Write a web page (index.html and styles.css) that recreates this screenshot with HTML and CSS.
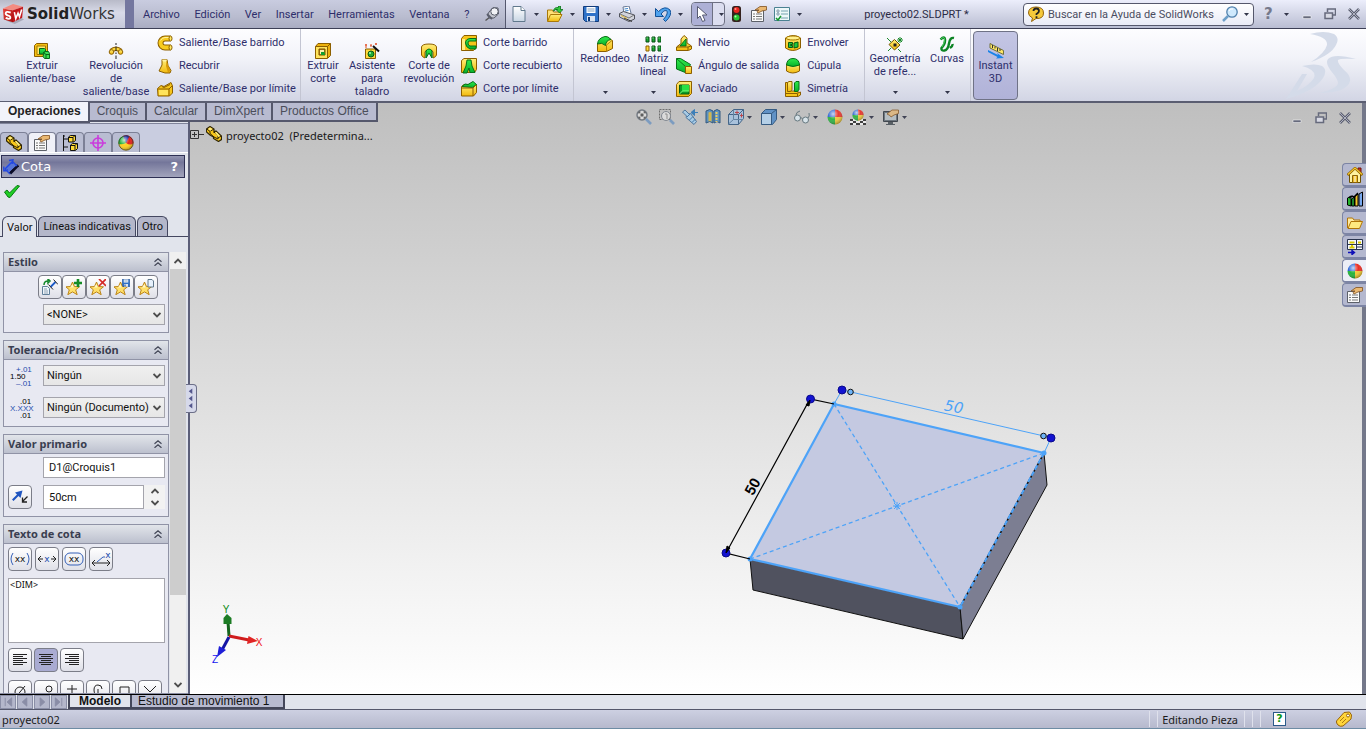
FILE: index.html
```html
<!DOCTYPE html>
<html lang="es">
<head>
<meta charset="utf-8">
<title>SolidWorks - proyecto02.SLDPRT</title>
<link rel="stylesheet" href="styles.css">
</head>
<body>
<svg class="defs" aria-hidden="true">
  <defs>
    <linearGradient id="gold" x1="0" y1="0" x2="0" y2="1"><stop offset="0" stop-color="#ffee7a"/><stop offset="1" stop-color="#f2b90c"/></linearGradient>
    <linearGradient id="green" x1="0" y1="0" x2="0" y2="1"><stop offset="0" stop-color="#30ea4c"/><stop offset="1" stop-color="#08b02a"/></linearGradient>
    <linearGradient id="red" x1="0" y1="0" x2="1" y2="1"><stop offset="0" stop-color="#e8453c"/><stop offset="1" stop-color="#a80d10"/></linearGradient>
    <linearGradient id="cover" x1="0" y1="0" x2="0" y2="1"><stop offset="0" stop-color="#fff"/><stop offset="1" stop-color="#c9d6e4"/></linearGradient>
    <radialGradient id="gloss" cx=".38" cy=".3" r=".7"><stop offset="0" stop-color="#fff" stop-opacity=".75"/><stop offset=".5" stop-color="#fff" stop-opacity="0"/><stop offset="1" stop-color="#000" stop-opacity=".3"/></radialGradient>
  </defs>
  <symbol id="i-extrude" viewBox="0 0 16 16"><path d="M.5 2.500 2.500.5h11v11l-2 2H.5z" fill="#f4c012" stroke="#8c5f00"/><path d="M3 3h8.500v8.500H3z" fill="#ffec70" stroke="#a87400"/><path d="M5.500 5.500h5l1 1V10l-1 1h-5z" fill="url(#green)" stroke="#066a18"/><path d="M10.500 8.500h4l1 2v5h-5l-1.500-2z" fill="#3bdc50" stroke="#066a18"/><path d="m9 9 3 2.500h3.500M12 11.500V15" stroke="#066a18" fill="none"/></symbol>
  <symbol id="i-revolve" viewBox="0 0 16 16"><path d="M3 8Q8 3.500 13 8" stroke="#8c5f00" stroke-width="4.500" fill="none"/><path d="M3 8Q8 3.500 13 8" stroke="#ffd83a" stroke-width="2.500" fill="none"/><circle cx="3.500" cy="9" r="2.300" fill="url(#gold)" stroke="#8c5f00"/><circle cx="12.500" cy="9" r="2.300" fill="url(#gold)" stroke="#8c5f00"/><path d="M8 0v2m0 1.500V8m0 1.500V11m0 1.500V16" stroke="#222" fill="none"/></symbol>
  <symbol id="i-sweep" viewBox="0 0 16 16"><path d="M13.500 3.500H8a4.500 4.500 0 0 0 0 9h5.500" fill="none" stroke="#8c5f00" stroke-width="6"/><path d="M14 3.500H8a4.500 4.500 0 0 0 0 9h6" fill="none" stroke="#f8cc20" stroke-width="4"/><path d="M13 2.500H8a5.500 5.500 0 0 0-4.500 3" fill="none" stroke="#fff2a0"/><ellipse cx="13.500" cy="3.500" rx="1.500" ry="2.500" fill="#ffe860" stroke="#8c5f00"/><ellipse cx="13.500" cy="12.500" rx="1.500" ry="2.500" fill="#ffe860" stroke="#8c5f00"/></symbol>
  <symbol id="i-loft" viewBox="0 0 16 16"><path d="M5 1.500h5l1 6 3 5-1 2.500H8L2 13l3-6z" fill="url(#gold)" stroke="#8c5f00"/><path d="M9.500 2 9 8l2 6.500 2.500-1.500-2.500-6z" fill="#d99b08"/><path d="M5 1.500h5l-1 2H6z" fill="#fff3a8"/></symbol>
  <symbol id="i-boundary" viewBox="0 0 16 16"><path d="M.5 7.500 4 4.500l3 1 7-4 1.500 3.500v7l-3 3H1z" fill="#f6c51a" stroke="#8c5f00"/><path d="M1 8h11l3-3M12 8v7M5 5.500l2 1 6-3" fill="none" stroke="#8c5f00"/><path d="M2 9h9v5H2z" fill="#ffe45c"/></symbol>
  <symbol id="i-cut" viewBox="0 0 16 16"><path d="M.5 3.500 3 .5h12.500v12l-3 3H.5z" fill="#eeb20c" stroke="#8c5f00"/><path d="M1 4h11v11H1z" fill="#ffe45c"/><path d="M12.500 3.500V15M.5 3.500h12l3-3" fill="none" stroke="#8c5f00"/><path d="M4 6h6v6H4z" fill="#b6860c" stroke="#7a4d00"/><path d="M5 7h4v4H5z" fill="#fff1b0"/><path d="M6 9h3V7l1 5H6z" fill="#10a030"/></symbol>
  <symbol id="i-wizard" viewBox="0 0 16 16"><path d="M1.500 6h10v9.500h-10z" fill="#ffdc3c" stroke="#8c5f00"/><circle cx="7" cy="11" r="3" fill="#20ac34" stroke="#075818"/><circle cx="6" cy="10" r="1" fill="#a0ffb0"/><path d="m9 3 6 5.500" stroke="#111" stroke-width="2"/><path d="M1 2h2m-1-1v2m4 0h2M7 1v2M1 4h2m8-3h2m-1-1v2" stroke="#e0461c"/></symbol>
  <symbol id="i-cutrev" viewBox="0 0 16 16"><path d="M.5 4Q1 1 8 1t7.500 3v8Q15 14 12 15V9l-1.500-2h-5L4 9v6Q1 14 .5 12z" fill="url(#gold)" stroke="#8c5f00"/><path d="M5 8q3-4 6 0v7L8 10l-3 5z" fill="url(#green)" stroke="#067018"/></symbol>
  <symbol id="i-cutsweep" viewBox="0 0 16 16"><path d="M.5 3.500 3 .5h12.500v12l-3 3H.5z" fill="#f6c51a" stroke="#8c5f00"/><path d="M1 4h3v11H1z" fill="#ffed80"/><path d="M15 3.500H9Q4.500 4 4.500 8T9 14h6v-3H9q-2-.5-2-3t2-2h6z" fill="url(#green)" stroke="#067018"/></symbol>
  <symbol id="i-cutloft" viewBox="0 0 16 16"><path d="M.5 2.500 3 .5h12.500v11l-2 3H.5z" fill="url(#gold)" stroke="#8c5f00"/><path d="M6 2h4l1 6 3 6.500H9L8 10l-2 5H2L5 8z" fill="url(#green)" stroke="#067018"/></symbol>
  <symbol id="i-cutbound" viewBox="0 0 16 16"><path d="M.5 5.500 3 3.500h12.500v8l-3 3.500H.5z" fill="url(#gold)" stroke="#8c5f00"/><path d="M1 5.500 4 3l3 .5L12 .5l3.500 3-4 3z" fill="url(#green)" stroke="#067018"/><path d="M1 7h11l3-3M12 7v8" fill="none" stroke="#8c5f00"/></symbol>
  <symbol id="i-fillet" viewBox="0 0 16 16"><path d="M.5 7.500 9 .5l6.500 4v8l-6 3h-9z" fill="url(#gold)" stroke="#8c5f00"/><path d="M9.500 15V9L15 4.500" fill="none" stroke="#b88400"/><path d="M.5 8Q1 2 8 .5q3-.5 6 3Q9 4 8.500 9.500 5 6 .5 8z" fill="url(#green)" stroke="#067018"/></symbol>
  <symbol id="i-pattern" viewBox="0 0 16 16"><path d="M1 1h3v5H1zM7 1h3v5H7zM13 1h3v5h-3zM7 10h3v5H7zM13 10h3v5h-3z" fill="#18a832" stroke="#064c12"/><path d="M1 10h3v5H1z" fill="#ffd83a" stroke="#8c5f00"/><path d="M1.500 2h1m5 0h1m5 0h1m-7 9h1m5 0h1" stroke="#a0ffa8"/></symbol>
  <symbol id="i-rib" viewBox="0 0 16 16"><path d="M.5 12 5 8.500V4L8 .5 11 3v5l4.500 3v3l-3 1.500H.5z" fill="url(#gold)" stroke="#8c5f00"/><path d="M4 11 10 4v7z" fill="url(#green)" stroke="#067018"/><path d="M1 12h11l3-1M12 12v3" fill="none" stroke="#8c5f00"/></symbol>
  <symbol id="i-draft" viewBox="0 0 16 16"><path d="M.5.5h4l10 6-4 8.500L.5 11z" fill="url(#green)" stroke="#067018"/><path d="m.5.5 9 8v6" fill="none" stroke="#0a7a1c"/><path d="M9.500 8.500h6v7h-6z" fill="url(#gold)" stroke="#8c5f00"/></symbol>
  <symbol id="i-shell" viewBox="0 0 16 16"><path d="M.5 3.500 3 .5h12.500v12l-3 3H.5z" fill="url(#gold)" stroke="#8c5f00"/><path d="M3.500 4h9.500v9H3.500z" fill="#0c9e28" stroke="#075a14"/><path d="M6 4h7v6H6z" fill="#28e044"/><path d="m3.500 13 3-3H13" stroke="#7cff80" fill="none"/></symbol>
  <symbol id="i-wrap" viewBox="0 0 16 16"><path d="M.5 3v10q7 5 15 0V3q-7-5-15 0z" fill="url(#gold)" stroke="#8c5f00"/><ellipse cx="8" cy="3" rx="7" ry="2" fill="#fff08c" stroke="#a87800"/><path d="M3.500 7.500h4v2h-2v1h2v2h-4zm5.500.5 4-1v5l-4 1z" fill="#20c83c" stroke="#075a14"/></symbol>
  <symbol id="i-dome" viewBox="0 0 16 16"><path d="M1.500 6v7q6 4 13 0V6z" fill="url(#gold)" stroke="#8c5f00"/><path d="M1.500 7Q2 .5 8 .5T14.500 7q-6.500 3-13 0z" fill="url(#green)" stroke="#067018"/></symbol>
  <symbol id="i-mirror" viewBox="0 0 16 16"><path d="M.5 1.500h2V10H13v2l2.500-1v3L13 15.500H.5z" fill="#f6c51a" stroke="#8c5f00"/><path d="M2.500 1.500 4 .5h3v8l-1.500 2h-3z" fill="url(#gold)" stroke="#8c5f00"/><path d="M9.500 2 11 .5h3v8l-1.500 2h-3z" fill="url(#green)" stroke="#067018"/><path d="M1 12.500h11.500V15" fill="none" stroke="#8c5f00"/></symbol>
  <symbol id="i-refgeo" viewBox="0 0 16 16"><path d="M7.500 3.500 13 9l-5.500 5L2 8.500z" fill="url(#gold)" stroke="#6e5200"/><path d="M6.500 7.500h3v3h-3z" fill="#222"/><path d="m0 2 4 4m7 7 3 3M1 15l3-3m9-11v6m-3-3h6M11 2l4 4m0-4-4 4" stroke="#168828"/></symbol>
  <symbol id="i-curves" viewBox="0 0 16 16"><path d="M1.500 3.500q4-4 4.500 0T2.500 12q-.5 3 3 2.500Q9 14 10 7.500T15 2M11 12q3-2 2.500-4" fill="none" stroke="#0c8424" stroke-width="2.400"/><path d="M2 3q3-3 3.500 0T3 11" fill="none" stroke="#5ce070" stroke-width=".8"/></symbol>
  <symbol id="i-instant" viewBox="0 0 16 16"><path d="m2 .5 13.500 7v4L2 5z" fill="#ffe765" stroke="#71703a"/><path d="M4.500 2v3M7 3.500v2m2.500-.5v3M12 6v2" stroke="#333" fill="none"/><path d="m0 7 10 5-1-2 7 5-8 .5 1.500-1.500L0 9z" fill="#1b83e8"/></symbol>
  <symbol id="i-new" viewBox="0 0 16 16"><path d="M2 .5h8l4 4v11H2z" fill="url(#cover)" stroke="#60788c"/><path d="M10 .5v4h4" fill="#fff" stroke="#60788c"/></symbol>
  <symbol id="i-open" viewBox="0 0 16 16"><path d="M.5 15V4h5l1 2h7v3" fill="#ffe078" stroke="#a87808"/><path d="m.5 15.500 3-7h11.500l-3.500 7z" fill="url(#gold)" stroke="#a87808"/><path d="M6.500 5q.5-4 5-3.500V0h2v3.500H16L12.500 7 9 3.500h1.500Q8.500 3 6.500 5z" fill="#35c840" stroke="#087018" stroke-width=".8"/></symbol>
  <symbol id="i-save" viewBox="0 0 16 16"><path d="M.5.5h15v15h-13l-2-2z" fill="#2f72c8" stroke="#123c7c"/><path d="M3.500 1h9v6h-9z" fill="#fff"/><path d="M4.500 3h7m-7 2h7" stroke="#87a4c2"/><path d="M4 10h8v5.500H4z" fill="#d9e3f1"/><path d="M5 11h2v4H5z" fill="#123c7c"/></symbol>
  <symbol id="i-print" viewBox="0 0 16 16"><path d="M5 8 4 1l6-1 2 7" fill="#fff" stroke="#667896"/><path d="M5.500 3 9 2.500M6 5l3.500-.5" stroke="#3b85cf"/><path d="m.5 7.500 4-2L15.500 9v4L10 15.500.5 11z" fill="#d2d4dc" stroke="#50535c"/><path d="m1 8 9 4 5-3" fill="none" stroke="#777"/><path d="m5 12 8 3.500" stroke="#333"/><path d="m2 9.500 6 3" stroke="#e7bc36"/></symbol>
  <symbol id="i-undo" viewBox="0 0 16 16"><path d="M.5 2.500v8h8L6 8q3-4.500 5.500-3.500 2.500 2.500-3 9l2 2q7-6.500 4.500-11.500Q10-1 3.500 5.500z" fill="#4ea2ee" stroke="#115198"/></symbol>
  <symbol id="i-cursor" viewBox="0 0 16 16"><path d="M3.500.5v12L6 10l2.500 5.500 2.500-1-2.500-5.500H13z" fill="#fff" stroke="#565a72"/></symbol>
  <symbol id="i-light" viewBox="0 0 16 16"><rect x="4" y="0" width="9" height="16" rx="2.500" fill="#34221e"/><circle cx="8.500" cy="4" r="3" fill="#e92720"/><circle cx="8.500" cy="11.500" r="3" fill="#27c634"/><circle cx="7.500" cy="3" r="1" fill="#ff9a8c"/><circle cx="7.500" cy="10.500" r="1" fill="#b2ffb6"/></symbol>
  <symbol id="i-props" viewBox="0 0 16 16"><path d="M.5 4.500h12v11H.5z" fill="#fafafa" stroke="#5c6068"/><path d="M2 8h2m1 0h6M2 10.500h2m1 0h6M2 13h2m1 0h6" stroke="#777"/><path d="M4 4 9 .5h6.500V4L11 5 7 7 6 5.500 8 4z" fill="#eab872" stroke="#805020" stroke-width=".8"/></symbol>
  <symbol id="i-list" viewBox="0 0 16 16"><path d="M.5 1.500h15v13H.5z" fill="#edf8f9" stroke="#4a8292"/><path d="M3 4h2v2H3zm0 3h2v2H3z" fill="#fff" stroke="#607f92" stroke-width=".7"/><path d="M7 5h7M7 8h7M7 12h7" stroke="#75a3b0"/><path d="m2 12 2 2 3-4" fill="none" stroke="#13962b" stroke-width="1.500"/></symbol>
  <symbol id="i-pin" viewBox="0 0 16 16"><path d="M1.500 14.500 6 11" stroke="#555" stroke-width="1.500"/><path d="M5 6 9 1.500l5 .5.500 6-4.500 4H5L3.500 9z" fill="#c3c5ce" stroke="#5a5e6c"/><circle cx="10.500" cy="5.500" r="3.700" fill="#f1f2f6" stroke="#5a5e6c"/><path d="m3 8 5 5" stroke="#5a5e6c" stroke-width="2"/></symbol>
  <symbol id="i-mag" viewBox="0 0 16 16"><circle cx="10" cy="6" r="5.200" fill="#cfe9fd" stroke="#5080ac" stroke-width="1.300"/><path d="M1 15 6 10" stroke="#6e9fc8" stroke-width="2.500"/><path d="M7 5q1-3 4-2" stroke="#fff" fill="none"/></symbol>
  <symbol id="i-zoomfit" viewBox="0 0 16 16"><circle cx="6" cy="6" r="5" fill="#dedede" stroke="#68707a" stroke-width="1.400"/><path d="m10 10 5 5" stroke="#7598c0" stroke-width="2.600"/><path d="M4.500 4.500h3v3h-3z" fill="#555"/><path d="M3 4.500V3h1.500m3 0H9v1.500m0 3V9H7.500m-3 0H3V7.500" stroke="#333" fill="none"/></symbol>
  <symbol id="i-zoomarea" viewBox="0 0 16 16"><path d="M.5.5h11v10H.5z" fill="none" stroke="#666" stroke-dasharray="2 1"/><circle cx="7" cy="7" r="4.500" fill="#dedede" stroke="#7c838d"/><path d="M6 5h2v5" fill="none" stroke="#888"/><path d="m11 11 4 4" stroke="#7598c0" stroke-width="2.600"/></symbol>
  <symbol id="i-prev" viewBox="0 0 16 16"><path d="M.5 3 3 1l4 4 1.500-.5 6 8-2.500 3L4 8.500 4.500 7z" fill="#a5cdea" stroke="#456f98"/><path d="m5 8 3-3m-.5 6L11 7.500M10 13.500l3.500-3.500" stroke="#3471a8"/><path d="M16 3.500h-5M12.500.5l-3.500 3 3.500 3z" stroke="#2f78b8" fill="#2f78b8"/></symbol>
  <symbol id="i-section" viewBox="0 0 16 16"><path d="M1 2q4-3 7 0v12q-3-3-7 0zM9 2q3-3 6 0v12q-3-3-6 0z" fill="#538ec1" stroke="#244e78"/><path d="M3.500 3.500q1.500-1 3 0v9q-1.500-1-3 0z" fill="#d6b640"/><path d="M11.500 3v10" stroke="#f1d05b" stroke-width="2" stroke-dasharray="2 1"/></symbol>
  <symbol id="i-orient" viewBox="0 0 16 16"><path d="M.5 5.500 5.500.5h10v9l-5 6H.5z" fill="#a7c3df" stroke="#375c82"/><path d="M.5 5.500h10v10m0-10 5-5" fill="none" stroke="#375c82"/><path d="M5.500 1v9.500H15M5.500 10.500.5 15" fill="none" stroke="#5b7e9f"/><path d="M7 3.500h4m-2-2v4m3 1h3m-1.500-2v4" fill="none" stroke="#bc3940"/></symbol>
  <symbol id="i-cube" viewBox="0 0 16 16"><path d="m.5 4.500 4-4h11v10l-4 5H.5z" fill="#568ec7" stroke="#27517c"/><path d="M1 5h9.500v10H1z" fill="#b4d2ec"/><path d="M10.500 15.500v-11m-10 0h10l5-4" fill="none" stroke="#27517c"/></symbol>
  <symbol id="i-glasses" viewBox="0 0 16 16"><circle cx="3.500" cy="9" r="3" fill="#dae7ee" stroke="#5d7078"/><circle cx="11.500" cy="11" r="3" fill="#dae7ee" stroke="#5d7078"/><path d="M6.500 9q1-1 2 1M2 6q0-3 4-4m8 7q2-2 1-5" fill="none" stroke="#5d7078"/></symbol>
  <symbol id="i-ball" viewBox="0 0 16 16"><path d="M8 8V.5A7.500 7.500 0 0 1 15.500 8z" fill="#ea2f25"/><path d="M8 8h7.500A7.500 7.500 0 0 1 8 15.500z" fill="#f2ca35"/><path d="M8 8v7.500A7.500 7.500 0 0 1 .5 8z" fill="#24b33b"/><path d="M8 8H.5A7.500 7.500 0 0 1 8 .5z" fill="#2a65d6"/><circle cx="8" cy="8" r="7.500" fill="url(#gloss)"/></symbol>
  <symbol id="i-ball3" viewBox="0 0 16 16"><circle cx="8" cy="8" r="7.500" fill="#ffd21f"/><path d="M8 8 5 .9A7.500 7.500 0 0 1 15.500 8q-3 3-7.500 0z" fill="#e3201c"/><path d="M5 1A7.500 7.500 0 0 0 .5 9Q4 10 8 8z" fill="#24b33b"/><path d="M8 8 5 1q6-2 6 1z" fill="#1c2ea8"/><circle cx="8" cy="8" r="7.200" fill="url(#gloss)" stroke="#333" stroke-width=".7"/></symbol>
  <symbol id="i-scene" viewBox="0 0 16 16"><path d="M0 10h16v6H0z" fill="#eee"/><path d="M0 10h3v2H0zm13 0h3v2h-3zM3 12h3v2H3zm7 0h3v2h-3zM0 14h3v2H0zm6 0h4v2H6zm7 0h3v2h-3z" fill="#333"/><svg x="2" width="12" height="12"><use href="#i-ball"/></svg></symbol>
  <symbol id="i-screen" viewBox="0 0 16 16"><path d="M.5 2.500h14v10H.5z" fill="#667078" stroke="#353c44"/><path d="M2 4h11v7H2z" fill="#b5bec3"/><path d="M5 13h5v2h2v1H3v-1h2z" fill="#4d555c"/><path d="m4 5 5-4h6.500v3.500L11 6 8 8 7 6.500z" fill="#dfb880" stroke="#805020" stroke-width=".8"/></symbol>
  <symbol id="i-part" viewBox="0 0 16 16"><path d="M.5 3 4 .5 8 3v3l2-1 5.500 5v3.500l-3 2-5-3V11L4 9 .5 6z" fill="#f6c51a" stroke="#2f2504" stroke-width="1.200"/><path d="m1 3 3 2.500v2L8 11l4 2V10L8 6M8 3 4.500 5M15 10l-3 2" fill="none" stroke="#2f2504"/><path d="m2 3 2-1.500L6.500 3l-2 1.500zM9 7l1.500-1L14 10l-1.500 1z" fill="#ffed7c"/></symbol>
  <symbol id="i-config" viewBox="0 0 16 16"><path d="M1.500 0v16M1 4h5m-5 8h5M1 1h2" stroke="#111" fill="none"/><path d="m6.500 2 2-1.500h5v5l-2 1.500h-5zm2 8 2-1.500h5v5l-2 2h-5z" fill="#ffda37" stroke="#111"/><path d="M6.500 2.500h4.500V7M8.500 10.500H13V15m-2-12.500 2-2m0 10 2-2" fill="none" stroke="#111"/></symbol>
  <symbol id="i-target" viewBox="0 0 16 16"><circle cx="8" cy="8" r="5" fill="none" stroke="#ca3cdc" stroke-width="1.600"/><path d="M8 0v16M0 8h16" stroke="#ca3cdc" stroke-width="1.600"/></symbol>
  <symbol id="i-dim" viewBox="0 0 16 16"><path d="m7 14.500 8-8.500" stroke="#0b0d28" stroke-width="3"/><path d="M6 13 2 8.500l6.500-7L14 6z" fill="#5574d8"/><path d="m2 10 7-7M.8 7.500v4.200L5 11M6 1.500l4-.7-.7 4M2 10l5 5M9 2l5 5" fill="none" stroke="#2348e0" stroke-width="1.400"/></symbol>
  <symbol id="i-check" viewBox="0 0 16 16"><path d="m.5 9 2.500-2 2.500 3L13 2.500l2.500.5L6 14.500 4 14z" fill="#20ce25" stroke="#087812"/></symbol>
  <symbol id="i-style" viewBox="0 0 16 16"><path d="M.5 7.500h5l2 2v6h-7z" fill="#eef5fb" stroke="#61809a"/><path d="M2 6q0-4 4-4m0-2v4l2-2z" fill="none" stroke="#13872a" stroke-width="1.500"/><path d="m8.500 8 5-5" stroke="#1c5cc8" stroke-width="1.800"/><path d="m6.500 5.500 4.500 5M11.500.5l4.500 5" stroke="#222" fill="none"/><path d="M2 10h3m-3 2h4m-4 2h4" stroke="#92a4b4"/></symbol>
  <symbol id="i-star" viewBox="0 0 16 16"><path d="m6.500 3 2 4.500 5 .3-3.800 3 1.500 4.900-4.700-2.800-4.700 2.800 1.500-4.900L-.2 7.800l4.700-.3z" fill="#ffe06a" stroke="#b57b0b" stroke-width=".9"/><path d="m6.500 5 1 3.500H4z" fill="#fff6c8"/></symbol>
  <symbol id="i-staradd" viewBox="0 0 16 16"><use href="#i-star"/><path d="M12 0v8M8 4h8" stroke="#158c26" stroke-width="2.600"/></symbol>
  <symbol id="i-stardel" viewBox="0 0 16 16"><use href="#i-star"/><path d="m9 0 7 7m0-7L9 7" stroke="#d52b27" stroke-width="1.700"/></symbol>
  <symbol id="i-starsave" viewBox="0 0 16 16"><use href="#i-star"/><svg x="8" y="0" width="8" height="8"><use href="#i-save"/></svg></symbol>
  <symbol id="i-starload" viewBox="0 0 16 16"><use href="#i-star"/><path d="M10 .5h4l1.500 1.500v6H10z" fill="#e7f1fc" stroke="#60788c"/></symbol>
  <symbol id="i-up2" viewBox="0 0 8 8"><path d="m.5 3.800 3.500-3 3.500 3m-7 4 3.500-3 3.500 3" fill="none" stroke="#444858" stroke-width="1.200"/></symbol>
  <symbol id="i-chev" viewBox="0 0 8 6"><path d="m.5 1 3.500 3.500L7.500 1" fill="none" stroke="#4c4c4c" stroke-width="1.900"/></symbol>
  <symbol id="i-caret" viewBox="0 0 5 3"><path d="M0 0h5L2.500 3z" fill="#33364a"/></symbol>
  <symbol id="i-min" viewBox="0 0 12 12"><path d="M2 8h8v2.500H2z" fill="#666a7c" stroke="#fff" stroke-width=".5"/></symbol>
  <symbol id="i-restore" viewBox="0 0 12 12"><path d="M3.500 4V1h8v6H9" fill="none" stroke="#666a7c" stroke-width="1.500"/><path d="M1 5h7.500v5.500H1z" fill="#d8dae4" stroke="#666a7c" stroke-width="1.500"/></symbol>
  <symbol id="i-close" viewBox="0 0 12 12"><path d="m1 1 10 10m0-10L1 11" stroke="#5c6072" stroke-width="2.600"/><path d="m1 1 10 10m0-10L1 11" stroke="#c3c5d3" stroke-width=".8"/></symbol>
  <symbol id="i-swap" viewBox="0 0 16 16"><path d="m0 10.500 5-5L3 3.500l7.500-2-2 7.500-2-2-5 5z" fill="#2056c0"/><path d="m15.500 7.500-5 5m0-4V13H15" fill="none" stroke="#222" stroke-width="1.300"/></symbol>
  <symbol id="i-home" viewBox="0 0 16 16"><path d="M11 1h3v6h-3z" fill="#c43024" stroke="#6e1610"/><path d="M2.500 7v8.500h11V7L8 2z" fill="#fff3a0" stroke="#6e5100"/><path d="m.5 8 7.500-7 7.500 7" fill="none" stroke="#8b6208" stroke-width="2.400"/><path d="m1 7.500 7-6.500 7 6.500" fill="none" stroke="#f4c72f" stroke-width="1.200"/><path d="M5.500 8.500h5v7h-5z" fill="#f2bf24" stroke="#8b6208"/><path d="M8 9v6" stroke="#fff"/></symbol>
  <symbol id="i-books" viewBox="0 0 16 16"><path d="M.5 7 4 5v10l-3.500-1z" fill="#26b52e" stroke="#000"/><path d="m4.500 8 3-2v9h-3z" fill="#19842b" stroke="#000"/><path d="m8 5 3-2v12H8z" fill="#f4c52c" stroke="#000"/><path d="m12 3 3.500-2v14H12z" fill="#79a9ef" stroke="#000"/><path d="m2 7 3-2 2 1 4-4" stroke="#000" fill="none" stroke-width="1.500"/></symbol>
  <symbol id="i-folder" viewBox="0 0 16 16"><path d="M.5 13V3h5l1.500 2h6v3" fill="#ffeaa0" stroke="#b07408"/><path d="m1 13.500 3-7h11.500l-3 7z" fill="#ffe980" stroke="#b07408"/></symbol>
  <symbol id="i-palette" viewBox="0 0 16 16"><path d="M.5.500h15v10H.5z" fill="#f6f7ff" stroke="#29344e"/><path d="M2.500 3.500h5m-5 5h5M4 6.500h2m5-3h3" stroke="#d9cb00" stroke-width="1.800"/><path d="M9.500 1v9M1 5.500h14M10 8h5" stroke="#29344e"/><path d="M1 13.500h5M5 11.500 7.500 13.500 5 15.500z" stroke="#1010b8" fill="#1010b8" stroke-width="1.400"/></symbol>
  <symbol id="i-help" viewBox="0 0 16 16"><path d="M8 1q7.500 0 7.500 6T8 12.500L3.500 15.500l1-3.500Q.5 10 .5 7 .5 1 8 1z" fill="#f6c93a" stroke="#94640b"/><path d="M5.500 5q0-2.500 2.700-2.500T11 5q0 1.500-2.500 3v1m0 1.200V12" fill="none" stroke="#222" stroke-width="1.800"/></symbol>
  <symbol id="i-tag" viewBox="0 0 16 16"><path d="M.5 10 8 1.500l5.500-.5L15.500 4 15 8l-8 7q-3 1-5-1T.5 10z" fill="#ffd53a" stroke="#98640a"/><circle cx="12" cy="4.500" r="1.500" fill="#fff" stroke="#98640a"/><path d="m4 10 4-4m-2 6 4-4" stroke="#ad7a14"/></symbol>
</svg>

<header class="titlebar">
  <div class="brand">
    <svg class="brand-mark" viewBox="0 0 24 22" aria-hidden="true"><path d="M4 18 14 22 24 17 21 15z" fill="#8d8f9e" opacity=".6"/><path d="m1 5 11 2v13L2 17z" fill="url(#red)"/><path d="m1 5 11 2 11-4-11-3z" fill="#f38b81"/><path d="m12 7 11-4-1 12-10 5z" fill="#c2181c"/><path d="M9.500 9.500Q4 7.500 4 10.500q0 1.500 2.800 2.200T9 15.500q-1 1.500-5-.2" fill="none" stroke="#fff" stroke-width="2"/><path d="m13.500 9 1.500 7 2.500-6 1.500 4 2.500-8" fill="none" stroke="#fff" stroke-width="1.700"/></svg>
    <span class="brand-name"><b>Solid</b>Works</span>
  </div>
  <nav class="menu">
    <button>Archivo</button><button>Edición</button><button>Ver</button><button>Insertar</button><button>Herramientas</button><button>Ventana</button><button>?</button>
    <button class="pin" aria-label="Fijar menú"><svg class="ic"><use href="#i-pin"/></svg></button>
  </nav>
  <div class="quick">
    <button class="tool" aria-label="Nuevo"><svg class="ic"><use href="#i-new"/></svg><svg class="caret"><use href="#i-caret"/></svg></button>
    <button class="tool" aria-label="Abrir"><svg class="ic"><use href="#i-open"/></svg><svg class="caret"><use href="#i-caret"/></svg></button>
    <button class="tool" aria-label="Guardar"><svg class="ic"><use href="#i-save"/></svg><svg class="caret"><use href="#i-caret"/></svg></button>
    <button class="tool" aria-label="Imprimir"><svg class="ic"><use href="#i-print"/></svg><svg class="caret"><use href="#i-caret"/></svg></button>
    <button class="tool" aria-label="Deshacer"><svg class="ic"><use href="#i-undo"/></svg><svg class="caret"><use href="#i-caret"/></svg></button>
    <button class="tool picked" aria-label="Seleccionar"><span class="pick"><svg class="ic"><use href="#i-cursor"/></svg></span><svg class="caret"><use href="#i-caret"/></svg></button>
    <button class="tool single" aria-label="Reconstruir"><svg class="ic"><use href="#i-light"/></svg></button>
    <button class="tool single" aria-label="Propiedades"><svg class="ic"><use href="#i-props"/></svg></button>
    <button class="tool" aria-label="Opciones"><svg class="ic"><use href="#i-list"/></svg><svg class="caret"><use href="#i-caret"/></svg></button>
  </div>
  <h1 class="doc-title">proyecto02.SLDPRT *</h1>
  <form class="search">
    <svg class="ic" aria-hidden="true"><use href="#i-help"/></svg>
    <input type="text" aria-label="Buscar en la Ayuda" placeholder="Buscar en la Ayuda de SolidWorks">
    <button type="button" aria-label="Buscar"><svg class="ic"><use href="#i-mag"/></svg><svg class="caret"><use href="#i-caret"/></svg></button>
  </form>
  <div class="win">
    <button class="q" aria-label="Ayuda">?</button>
    <button aria-label="Más ayuda"><svg class="caret"><use href="#i-caret"/></svg></button>
    <button aria-label="Minimizar"><svg class="wic"><use href="#i-min"/></svg></button>
    <button aria-label="Restaurar"><svg class="wic"><use href="#i-restore"/></svg></button>
    <button aria-label="Cerrar"><svg class="wic"><use href="#i-close"/></svg></button>
  </div>
</header>

<section class="ribbon" aria-label="Operaciones">
  <div class="group g1">
    <button class="big"><svg class="ic"><use href="#i-extrude"/></svg>Extruir<br>saliente/base</button>
    <button class="big"><svg class="ic"><use href="#i-revolve"/></svg>Revolución<br>de<br>saliente/base</button>
    <div class="stack">
      <button><svg class="ic"><use href="#i-sweep"/></svg>Saliente/Base barrido</button>
      <button><svg class="ic"><use href="#i-loft"/></svg>Recubrir</button>
      <button><svg class="ic"><use href="#i-boundary"/></svg>Saliente/Base por límite</button>
    </div>
  </div>
  <div class="group g2">
    <button class="big"><svg class="ic"><use href="#i-cut"/></svg>Extruir<br>corte</button>
    <button class="big"><svg class="ic"><use href="#i-wizard"/></svg>Asistente<br>para<br>taladro</button>
    <button class="big"><svg class="ic"><use href="#i-cutrev"/></svg>Corte de<br>revolución</button>
    <div class="stack">
      <button><svg class="ic"><use href="#i-cutsweep"/></svg>Corte barrido</button>
      <button><svg class="ic"><use href="#i-cutloft"/></svg>Corte recubierto</button>
      <button><svg class="ic"><use href="#i-cutbound"/></svg>Corte por límite</button>
    </div>
  </div>
  <div class="group g3">
    <button class="big drop"><svg class="ic"><use href="#i-fillet"/></svg>Redondeo<svg class="caret"><use href="#i-caret"/></svg></button>
    <button class="big drop"><svg class="ic"><use href="#i-pattern"/></svg>Matriz<br>lineal<svg class="caret"><use href="#i-caret"/></svg></button>
    <div class="stack">
      <button><svg class="ic"><use href="#i-rib"/></svg>Nervio</button>
      <button><svg class="ic"><use href="#i-draft"/></svg>Ángulo de salida</button>
      <button><svg class="ic"><use href="#i-shell"/></svg>Vaciado</button>
    </div>
    <div class="stack">
      <button><svg class="ic"><use href="#i-wrap"/></svg>Envolver</button>
      <button><svg class="ic"><use href="#i-dome"/></svg>Cúpula</button>
      <button><svg class="ic"><use href="#i-mirror"/></svg>Simetría</button>
    </div>
  </div>
  <div class="group g4">
    <button class="big drop"><svg class="ic"><use href="#i-refgeo"/></svg>Geometría<br>de refe...<svg class="caret"><use href="#i-caret"/></svg></button>
    <button class="big drop"><svg class="ic"><use href="#i-curves"/></svg>Curvas<svg class="caret"><use href="#i-caret"/></svg></button>
  </div>
  <button class="big instant"><svg class="ic"><use href="#i-instant"/></svg>Instant<br>3D</button>
  <svg class="ds" viewBox="1287 31 72 70" aria-hidden="true"><path d="M1311 34q14-4 24 0 6 4 2 11-5 10-25 17 14-9 16-17 1-8-17-11zM1303 66q14-3 20 0 6 4 1 12-8 13-37 21l16-25h5l-10 17q12-5 17-13 3-8-12-12zM1357 59q-16-1-18 1-1 3 6 10 7 6 6 11-3 12-31 12 18-4 19-10 0-4-7-12-6-8-3-12 6-6 28 0z" fill="#d4dbe9"/></svg>
</section>

<main class="work">
  <nav class="cmd-tabs">
    <button class="on">Operaciones</button><button>Croquis</button><button>Calcular</button><button>DimXpert</button><button>Productos Office</button>
  </nav>

  <aside class="panel">
    <div class="panel-tabs">
      <button aria-label="Gestor de diseño"><svg class="ic"><use href="#i-part"/></svg></button>
      <button class="on" aria-label="PropertyManager"><svg class="ic"><use href="#i-props"/></svg></button>
      <button aria-label="Configuraciones"><svg class="ic"><use href="#i-config"/></svg></button>
      <button aria-label="DimXpert"><svg class="ic"><use href="#i-target"/></svg></button>
      <button aria-label="Apariencias"><svg class="ic"><use href="#i-ball3"/></svg></button>
    </div>
    <h2 class="pm-title"><svg class="ic"><use href="#i-dim"/></svg><span>Cota</span><button aria-label="Ayuda">?</button></h2>
    <button class="ok" aria-label="Aceptar"><svg class="ic"><use href="#i-check"/></svg></button>
    <div class="pm-tabs"><button class="on">Valor</button><button>Líneas indicativas</button><button>Otro</button></div>

    <div class="pm-body">
      <div class="pm-list">
        <section class="box">
          <h3>Estilo<svg class="up2"><use href="#i-up2"/></svg></h3>
          <div class="styles">
            <button class="sq" aria-label="Aplicar estilo"><svg class="ic"><use href="#i-style"/></svg></button><button class="sq" aria-label="Agregar estilo"><svg class="ic"><use href="#i-staradd"/></svg></button><button class="sq" aria-label="Eliminar estilo"><svg class="ic"><use href="#i-stardel"/></svg></button><button class="sq" aria-label="Guardar estilo"><svg class="ic"><use href="#i-starsave"/></svg></button><button class="sq" aria-label="Cargar estilo"><svg class="ic"><use href="#i-starload"/></svg></button>
          </div>
          <div class="row"><span class="lead"></span><span class="sel"><select aria-label="Estilo"><option>&lt;NONE&gt;</option></select><svg><use href="#i-chev"/></svg></span></div>
        </section>
        <section class="box tol">
          <h3>Tolerancia/Precisión<svg class="up2"><use href="#i-up2"/></svg></h3>
          <div class="row"><svg class="lead" viewBox="0 0 26 22"><text x="8" y="7" class="mini blue">+.01</text><text x="2" y="14" class="mini">1.50</text><text x="8" y="21" class="mini blue">–.01</text></svg><span class="sel"><select aria-label="Tipo de tolerancia"><option>Ningún</option></select><svg><use href="#i-chev"/></svg></span></div>
          <div class="row"><svg class="lead" viewBox="0 0 26 22"><text x="12" y="7" class="mini">.01</text><text x="2" y="14" class="mini blue">X.XXX</text><text x="12" y="21" class="mini">.01</text></svg><span class="sel"><select aria-label="Precisión"><option>Ningún (Documento)</option></select><svg><use href="#i-chev"/></svg></span></div>
        </section>
        <section class="box prim">
          <h3>Valor primario<svg class="up2"><use href="#i-up2"/></svg></h3>
          <div class="row"><span class="lead"></span><input type="text" aria-label="Nombre" value="D1@Croquis1"></div>
          <div class="row"><span class="lead"><button class="sq" aria-label="Invertir sentido"><svg class="ic"><use href="#i-swap"/></svg></button></span><input class="tall" type="text" aria-label="Valor" value="50cm"><span class="spin"><button aria-label="Aumentar"><svg class="flip"><use href="#i-chev"/></svg></button><button aria-label="Disminuir"><svg><use href="#i-chev"/></svg></button></span></div>
        </section>
        <section class="box txt">
          <h3>Texto de cota<svg class="up2"><use href="#i-up2"/></svg></h3>
          <div class="btns">
            <button class="sq" aria-label="Paréntesis"><svg class="wide" viewBox="0 0 20 16"><path d="M3 2Q-1 8 3 14M17 2q4 6 0 12" class="ln b"/><text x="10" y="11" class="xx">xx</text></svg></button>
            <button class="sq" aria-label="Centrar cota"><svg class="wide" viewBox="0 0 20 16"><path d="M1 8h5M4 5 1 8l3 3m15-3h-5m2-3 3 3-3 3" class="ln"/><text x="10" y="11" class="xx blue">x</text></svg></button>
            <button class="sq" aria-label="Inspección"><svg class="wide" viewBox="0 0 20 16"><rect x="1" y="2" width="18" height="12" rx="5" class="ln b"/><text x="10" y="11" class="xx">xx</text></svg></button>
            <button class="sq" aria-label="Desplazar texto"><svg class="wide" viewBox="0 0 20 16"><path d="M1 12h18M4 9l-3 3 3 3m12-6 3 3-3 3" class="ln"/><path d="m6 11 6-5h2" class="ln b"/><text x="17" y="7" class="xx blue">x</text></svg></button>
          </div>
          <textarea aria-label="Texto de cota">&lt;DIM&gt;</textarea>
          <div class="btns tight">
            <button class="sq" aria-label="Izquierda"><svg class="ic" viewBox="0 0 16 16"><path d="M1 2.500h14m-14 2h10m-10 2h14m-14 2h10m-10 2h14m-14 2h10" class="ln"/></svg></button>
            <button class="sq on" aria-label="Centro"><svg class="ic" viewBox="0 0 16 16"><path d="M1 2.500h14m-12 2h10m-12 2h14m-12 2h10m-12 2h14m-12 2h10" class="ln"/></svg></button>
            <button class="sq" aria-label="Derecha"><svg class="ic" viewBox="0 0 16 16"><path d="M1 2.500h14m-10 2h10m-14 2h14m-10 2h10m-14 2h14m-10 2h10" class="ln"/></svg></button>
          </div>
          <div class="btns tight">
            <button class="sq" aria-label="Diámetro"><svg class="ic" viewBox="0 0 16 16"><circle cx="8" cy="8" r="5" class="ln"/><path d="M3 14 13 2" class="ln"/></svg></button>
            <button class="sq" aria-label="Grados"><svg class="ic" viewBox="0 0 16 16"><circle cx="11" cy="5" r="3" class="ln"/></svg></button>
            <button class="sq" aria-label="Más menos"><svg class="ic" viewBox="0 0 16 16"><path d="M8 1v10M3 5h10" class="ln"/></svg></button>
            <button class="sq" aria-label="Línea central"><svg class="ic" viewBox="0 0 16 16"><path d="M12 5q0-4-4-4T4 6t4 5M8 5v4" class="ln"/></svg></button>
            <button class="sq" aria-label="Cuadrado"><svg class="ic" viewBox="0 0 16 16"><path d="M4 3h9v9H4z" class="ln"/></svg></button>
            <button class="sq" aria-label="Más símbolos"><svg class="ic" viewBox="0 0 16 16"><path d="m2 2 6 6 6-6" class="ln"/></svg></button>
          </div>
        </section>
      </div>
      <div class="scroll"><button aria-label="Subir"><svg class="flip"><use href="#i-chev"/></svg></button><span class="thumb"></span><button aria-label="Bajar"><svg><use href="#i-chev"/></svg></button></div>
    </div>
    <button class="splitter" aria-label="Contraer panel"><svg viewBox="0 0 10 28"><path d="M7 3v6L3 6zM7 11v6l-4-3zM7 19v6l-4-3z" fill="#53568c"/></svg></button>
  </aside>

  <div class="view">
    <svg class="model" viewBox="190 103 1172 591" role="img" aria-label="Pieza en 3D">
      <path d="M750 559 960 607l3 32-210-49z" fill="#50525f" stroke="#111"/>
      <path d="m1044 453 3 32-84 154-3-32z" fill="#7c7e92" stroke="#111"/>
      <path d="m834 404 210 49-84 154-210-48z" fill="#c4c9e1"/>
      <path d="m1044 453-84 154" stroke="#111" stroke-width="1.500"/>
      <path d="m1044 453-84 154" stroke="#4da3f8" stroke-width="2" stroke-dasharray="5 2"/>
      <path d="m1044 453-210-49-84 155 210 48" fill="none" stroke="#4da3f8" stroke-width="2.200"/>
      <path d="m834 404 126 203M750 559l294-106" stroke="#4da3f8" stroke-width="1.300" stroke-dasharray="4 3" fill="none"/>
      <path d="M893 506h8m-4-4v8m-3-7 6 6m0-6-6 6" stroke="#4da3f8"/>
      <g fill="#4da3f8"><circle cx="834" cy="404" r="2.500"/><circle cx="1044" cy="453" r="2.500"/><circle cx="960" cy="607" r="2.500"/><circle cx="750" cy="559" r="2.500"/></g>
      <path d="m834 404 8-14 9 2 193 44 7 2-7 15" fill="none" stroke="#4da3f8"/>
      <path d="m834 404-24-5-84 154 24 6" fill="none" stroke="#000" stroke-width="1.200"/>
      <g fill="#1212d0" stroke="#0a0a8c"><circle cx="842" cy="390" r="4"/><circle cx="1051" cy="438" r="4"/><circle cx="810.500" cy="399" r="4"/><circle cx="726" cy="553" r="4"/></g>
      <path d="m810 400-4 5 3 1zM726 553l1-7 3 2z" stroke="#000"/>
      <g fill="#6eb4f8" stroke="#111"><circle cx="850.500" cy="392" r="2.800"/><circle cx="1043.500" cy="436" r="2.800"/></g>
      <text class="dim sel-dim" transform="translate(953 412) rotate(10)">50</text>
      <text class="dim" transform="translate(757 489) rotate(-61)">50</text>
      <g class="triad">
        <path d="m229 636-1-14" stroke="#14641c" stroke-width="3"/><path d="m227 614 4.500 4v6h-8v-6z" fill="#1c7c24"/>
        <path d="m229 636 20 4" stroke="#d01c1c" stroke-width="3"/><path d="m258 641-11 3 1.500-8z" fill="#e02424"/>
        <path d="m229 637-7 13" stroke="#1414a4" stroke-width="3"/><path d="m217 657 2-11 7 4z" fill="#1e1ed8"/>
        <text x="226" y="613" fill="#0a8a14">Y</text><text x="259" y="646" fill="#f01414">X</text><text x="215" y="663" fill="#1414f0">Z</text>
      </g>
    </svg>
    <div class="tree"><svg class="plus" viewBox="0 0 14 9"><path d="M.5.500h8v8h-8zM2 4.500h5M4.500 2v5M9 4.500h5" fill="none" stroke="#333"/></svg><svg class="ic"><use href="#i-part"/></svg><span>proyecto02&nbsp; (Predetermina...</span></div>
    <div class="hud">
      <button aria-label="Zoom para ajustar"><svg class="ic"><use href="#i-zoomfit"/></svg></button>
      <button aria-label="Zoom encuadre"><svg class="ic"><use href="#i-zoomarea"/></svg></button>
      <button aria-label="Vista previa"><svg class="ic"><use href="#i-prev"/></svg></button>
      <button aria-label="Vista de sección"><svg class="ic"><use href="#i-section"/></svg></button>
      <button class="w" aria-label="Orientación"><svg class="ic"><use href="#i-orient"/></svg><svg class="caret"><use href="#i-caret"/></svg></button>
      <button class="w" aria-label="Estilo de visualización"><svg class="ic"><use href="#i-cube"/></svg><svg class="caret"><use href="#i-caret"/></svg></button>
      <button class="w" aria-label="Ocultar/visualizar"><svg class="ic"><use href="#i-glasses"/></svg><svg class="caret"><use href="#i-caret"/></svg></button>
      <button aria-label="Editar apariencia"><svg class="ic"><use href="#i-ball"/></svg></button>
      <button class="w" aria-label="Escena"><svg class="ic"><use href="#i-scene"/></svg><svg class="caret"><use href="#i-caret"/></svg></button>
      <button class="w" aria-label="Configuración de vista"><svg class="ic"><use href="#i-screen"/></svg><svg class="caret"><use href="#i-caret"/></svg></button>
    </div>
    <div class="doc-win">
      <button aria-label="Minimizar documento"><svg class="wic"><use href="#i-min"/></svg></button>
      <button aria-label="Restaurar documento"><svg class="wic"><use href="#i-restore"/></svg></button>
      <button aria-label="Cerrar documento"><svg class="wic"><use href="#i-close"/></svg></button>
    </div>
  </div>
  <div class="edge"></div>
  <nav class="task">
    <button aria-label="Recursos"><svg class="ic"><use href="#i-home"/></svg></button>
    <button aria-label="Biblioteca de diseño"><svg class="ic"><use href="#i-books"/></svg></button>
    <button aria-label="Explorador de archivos"><svg class="ic"><use href="#i-folder"/></svg></button>
    <button aria-label="Paleta de visualización"><svg class="ic"><use href="#i-palette"/></svg></button>
    <button class="on" aria-label="Apariencias y escenas"><svg class="ic"><use href="#i-ball"/></svg></button>
    <button aria-label="Propiedades personalizadas"><svg class="ic"><use href="#i-props"/></svg></button>
  </nav>
</main>

<nav class="sheets">
  <button class="nav" aria-label="Primero"><svg viewBox="0 0 14 13"><path d="M4 2v9M11 2v9L6 6.500z"/></svg></button>
  <button class="nav" aria-label="Anterior"><svg viewBox="0 0 14 13"><path d="M9 2v9L4 6.500z"/></svg></button>
  <button class="nav" aria-label="Siguiente"><svg viewBox="0 0 14 13"><path d="M5 2v9l5-4.500z"/></svg></button>
  <button class="nav" aria-label="Último"><svg viewBox="0 0 14 13"><path d="M10 2v9M3 2v9l5-4.500z"/></svg></button>
  <button class="sheet on">Modelo</button><button class="sheet">Estudio de movimiento 1</button>
</nav>
<footer class="status">
  <span class="name">proyecto02</span>
  <span class="cell"></span><span class="cell mode">Editando Pieza</span><span class="cell"></span><span class="cell"></span>
  <button class="cell qm" aria-label="Ayuda rápida"><b>?</b></button>
  <button class="tag" aria-label="Etiquetas"><svg class="ic"><use href="#i-tag"/></svg></button>
</footer>
</body>
</html>
```

FILE: styles.css
```css
:root {
  --ui: Roboto, "Noto Sans", sans-serif;
  --head: "Noto Sans", "Open Sans", sans-serif;
  --tab: "Liberation Sans", Arial, sans-serif;
  --navy: #2e2e6b;
}
* { box-sizing: border-box; }
body {
  margin: 0;
  height: 100vh;
  display: flex;
  flex-direction: column;
  overflow: hidden;
  font: 11px/13px var(--ui);
  color: #1a1a1a;
  background: #e1e4ec;
}
button {
  font: inherit;
  color: inherit;
  background: none;
  border: 0;
  padding: 0;
  margin: 0;
}
h1, h2, h3 { margin: 0; font: inherit; }
.defs { position: absolute; width: 0; height: 0; }
.ic { width: 16px; height: 16px; flex: none; display: block; overflow: visible; }
.caret { width: 5px; height: 3px; flex: none; display: block; }
.wic { width: 12px; height: 12px; display: block; }

/* Title bar */
.titlebar {
  flex: none;
  height: 29px;
  display: flex;
  align-items: center;
  background: linear-gradient(#eceefb, #b9bdd2);
  border-bottom: 1px solid #3c3f55;
  color: var(--navy);
}
.brand {
  width: 134px;
  height: 28px;
  display: flex;
  align-items: center;
  gap: 3px;
  padding-left: 2px;
  border-right: 9px solid #74779f;
  background: linear-gradient(#b8bac8, #d9dbe9 45%, #c6c9da);
}
.brand-mark { width: 22px; height: 22px; }
.brand-name { font: 15px/18px "DejaVu Sans", sans-serif; color: #353535; }
.brand-name b { color: #222; }
.menu {
  flex: none;
  width: 372px;
  height: 28px;
  display: flex;
  align-items: center;
  justify-content: space-between;
  padding: 0 5px 0 9px;
  background: linear-gradient(#c9cce0, #b9bccf 60%, #a9acc2);
  border-right: 1px solid #55586e;
}
.quick { display: flex; align-items: center; padding-left: 5px; }
.tool { width: 36px; height: 24px; display: flex; align-items: center; gap: 7px; }
.tool.single { width: 23px; }
.picked {
  width: 34px;
  gap: 6px;
  margin-right: 3px;
  border: 1px solid #6d7083;
  border-radius: 4px;
  background: #dcdef0;
}
.pick { background: #adb0d6; border-right: 1px solid #6d7083; padding: 3px 2px; border-radius: 3px 0 0 3px; }
.doc-title { flex: 1; text-align: center; color: #2b2b45; }
.search {
  width: 231px;
  height: 23px;
  display: flex;
  align-items: center;
  gap: 4px;
  padding: 0 4px;
  border: 1px solid #55586c;
  border-radius: 4px;
  background: linear-gradient(#fff, #e9ebf6);
}
.search input { flex: 1; min-width: 0; border: 0; padding: 0; background: none; font: inherit; outline: 0; }
.search input::placeholder { color: #4a4c60; opacity: 1; }
.search button { display: flex; align-items: center; gap: 6px; }
.win { width: 112px; display: flex; align-items: center; justify-content: space-between; padding: 0 6px 0 10px; }
.q { font: bold 15px/16px "DejaVu Sans", sans-serif; color: #76798c; }

/* Ribbon */
.ribbon {
  flex: none;
  height: 74px;
  display: flex;
  background: linear-gradient(#fdfdff, #f2f3f9 40%, #d2d5e4);
  border-bottom: 2px solid #5b5e72;
  color: var(--navy);
}
.group { flex: none; display: flex; border-right: 1px solid #c3c5d2; }
.g1 { width: 301px; padding-left: 3px; }
.g2 { width: 273px; }
.g3 { width: 291px; }
.g4 { width: 106px; }
.big {
  flex: none;
  display: flex;
  flex-direction: column;
  align-items: center;
  justify-content: flex-start;
  padding-top: 14px;
  text-align: center;
  height: 72px;
  white-space: nowrap;
  position: relative;
}
.drop { padding-top: 7px; }
.big .caret { position: absolute; left: 50%; margin-left: -2px; bottom: 7px; }
.g1 .big:nth-child(1) { width: 78px; }
.g1 .big:nth-child(2) { width: 70px; }
.g2 .big:nth-child(1) { width: 44px; }
.g2 .big:nth-child(2) { width: 54px; }
.g2 .big:nth-child(3) { width: 60px; }
.g3 .big:nth-child(1) { width: 62px; }
.g3 .big:nth-child(2) { width: 34px; }
.g4 .big:nth-child(1) { width: 60px; }
.g4 .big:nth-child(2) { width: 44px; }
.stack { display: flex; flex-direction: column; padding: 2px 0 0 6px; }
.g2 .stack { padding-left: 2px; }
.g3 .stack { width: 113px; }
.stack button { height: 23px; display: flex; align-items: center; gap: 6px; white-space: nowrap; }
.instant {
  width: 45px;
  height: 69px;
  margin: 2px 0 0 2px;
  padding-top: 11px;
  border: 1px solid #6f7286;
  border-radius: 4px;
  background: linear-gradient(#c4c6e4, #b0b2d8);
}
.ds { width: 72px; height: 70px; margin: 2px 8px 0 auto; }

/* Work area */
.work { flex: 1; min-height: 0; display: flex; position: relative; }
.cmd-tabs {
  position: absolute;
  z-index: 2;
  left: 0;
  top: 0;
  display: flex;
  font: 12px/17px var(--tab);
  color: #4b4e5a;
}
.cmd-tabs button {
  height: 19px;
  padding: 0 7px;
  background: #b8bbd0;
  border: 1px solid #55586c;
  border-width: 0 2px 2px 0;
}
.cmd-tabs .on { height: 21px; margin-top: -1px; padding-left: 8px; background: #f2f3fa; font-weight: bold; color: #222; }

.panel {
  flex: none;
  width: 190px;
  position: relative;
  display: flex;
  flex-direction: column;
  padding-top: 20px;
  background: #e1e4ec;
  border-right: 2px solid #5b5e78;
}
.panel-tabs { display: flex; height: 30px; padding-top: 8px; background: #c9cde0; border-top: 1px solid #80849a; border-bottom: 1px solid #fff; }
.panel-tabs button { width: 28px; padding: 2px 5px; border: 1px solid #7c8096; border-bottom: 0; border-radius: 4px 4px 0 0; background: #b9bdd2; }
.panel-tabs .on { background: #f0f1f8; }
.pm-title {
  height: 23px;
  display: flex;
  align-items: center;
  gap: 2px;
  margin: 2px 3px 0 1px;
  padding: 0 6px 0 1px;
  border: 1px solid #2e3054;
  color: #fff;
  background: linear-gradient(#9496b2, #74769a 30%, #a2a4bc);
}
.pm-title span { flex: 1; font: 13px/16px "DejaVu Sans", sans-serif; }
.pm-title button { font: bold 13px/16px "DejaVu Sans", sans-serif; }
.ok { align-self: flex-start; padding: 5px 4px; }
.pm-tabs { display: flex; gap: 1px; align-items: flex-end; height: 33px; padding-left: 2px; border-bottom: 1px solid #444760; color: #111; }
.pm-tabs button { height: 20px; padding: 0 4px; white-space: nowrap; border: 1px solid #444760; border-bottom: 0; border-radius: 6px 6px 0 0; background: #b4b7ca; }
.pm-tabs .on { height: 21px; margin-bottom: -1px; background: #e1e4ec; }
.pm-body { flex: 1; min-height: 0; display: flex; padding: 15px 2px 0 3px; border-bottom: 1px solid #8a8da2; }
.pm-list { width: 167px; overflow: hidden; display: flex; flex-direction: column; gap: 7px; }
.box { flex: none; border: 1px solid #9093a6; background: #e8e9f2; padding-bottom: 7px; }
.box h3 {
  height: 19px;
  display: flex;
  align-items: center;
  justify-content: space-between;
  padding: 0 6px 1px 4px;
  font: bold 11px/13px var(--head);
  color: #3a3e50;
  background: linear-gradient(#e2e5ea, #bcc0ce);
  border-bottom: 1px solid #9093a6;
}
.up2 { width: 8px; height: 8px; }
.styles { display: flex; padding: 3px 0 5px 34px; }
.sq {
  width: 24px;
  height: 24px;
  display: flex;
  align-items: center;
  justify-content: center;
  border: 1px solid #7b7d88;
  border-radius: 4px;
  background: linear-gradient(#fff, #dfe0e8);
}
.sq.on { background: #a9abd2; }
.row { display: flex; padding: 0 3px 0 4px; }
.lead { flex: none; width: 35px; }
svg.lead { width: 26px; height: 22px; margin-right: 9px; }
.sel { flex: 1; position: relative; display: flex; }
.sel select, .row input, .txt textarea {
  width: 100%;
  min-width: 0;
  height: 21px;
  margin: 0;
  padding: 0 5px;
  border: 1px solid #a4a4ac;
  border-radius: 0;
  background: #fff;
  font: inherit;
  color: #111;
}
.sel select { appearance: none; background: linear-gradient(#f0f0f0, #e6e6e6); padding: 0 3px; }
.sel svg { position: absolute; right: 4px; top: 8px; width: 8px; height: 6px; }
.tol .row { padding-top: 5px; }
.tol .row + .row { padding-top: 10px; }
.prim .row { padding-top: 3px; }
.prim .row + .row { padding-top: 7px; }
.row .tall { height: 24px; }
.spin { flex: none; width: 21px; height: 24px; display: flex; flex-direction: column; background: #f2f2f2; }
.spin button { flex: 1; display: flex; align-items: center; justify-content: center; }
.spin svg, .scroll svg { width: 8px; height: 6px; }
.flip { transform: rotate(180deg); }
.btns { display: flex; gap: 3px; padding: 3px 4px 7px; }
.btns.tight { gap: 2px; padding: 5px 4px 3px; }
.wide { width: 20px; height: 16px; }
.ln { fill: none; stroke: #222; }
.b { stroke: #3560b8; }
.xx { font: 9px "DejaVu Sans", sans-serif; text-anchor: middle; fill: #111; }
.mini { font: 8px var(--tab); fill: #000; }
.mini.blue, .xx.blue { fill: #1c4cae; }
.txt textarea { display: block; width: 157px; height: 65px; margin: 0 4px; padding: 0 1px; font: 9px/11px var(--head); resize: none; }
.scroll { width: 16px; margin-left: 1px; display: flex; flex-direction: column; background: #f0f0f0; }
.scroll button { height: 17px; display: flex; align-items: center; justify-content: center; }
.thumb { height: 326px; background: #cdcdcd; margin-bottom: auto; }
.splitter { position: absolute; z-index: 2; right: -9px; top: 281px; width: 11px; height: 29px; border: 1px solid #6c6f88; border-left: 0; border-radius: 0 4px 4px 0; background: #d6d9ea; }
.splitter svg { display: block; width: 9px; height: 27px; }

.view { flex: 1; min-width: 0; position: relative; background: linear-gradient(#bfbfbf, #fff); overflow: hidden; }
.model { display: block; width: 100%; height: 100%; }
.dim { font: bold 15px var(--tab); text-anchor: middle; }
.sel-dim { font: italic 15px "DejaVu Sans", sans-serif; fill: #4da3f8; }
.triad text { font: 10px var(--tab); text-anchor: middle; }
.tree { position: absolute; left: 0; top: 23px; display: flex; align-items: center; gap: 2px; white-space: nowrap; font: 11px/13px var(--head); }
.tree span { padding: 3px 0 0 2px; }
.plus { width: 14px; height: 9px; }
.hud { position: absolute; left: 50%; top: 6px; margin-left: -140px; display: flex; gap: 7px; }
.hud button { display: flex; align-items: center; gap: 3px; width: 16px; opacity: .9; }
.hud .w { width: 26px; }
.doc-win { position: absolute; right: 11px; top: 9px; display: flex; gap: 12px; }
.edge { flex: none; width: 4px; background: #74788a; }
.task { position: absolute; right: 0; top: 60px; display: flex; flex-direction: column; }
.task button { width: 24px; height: 24px; padding: 3px 4px; border: 1px solid #7c84a4; border-right: 0; border-bottom-width: 2px; border-radius: 4px 0 0 4px; background: #b4b8cf; }
.task .on { background: #eceef6; }

/* Sheet tabs and status bar */
.sheets { flex: none; height: 15px; display: flex; border-top: 1px solid #000; background: #e1e4ec; font: 12px/13px var(--tab); color: #111; }
.nav { width: 16px; margin-right: 1px; background: #b4b7cb; border: 1px solid #8a8ea6; }
.nav svg { display: block; width: 14px; height: 12px; }
.nav path { fill: #8a8da6; stroke: #8a8da6; }
.sheet { padding: 0 9px 1px; background: #b8bbd0; border: 1px solid #44475a; border-width: 0 2px 2px 0; }
.sheet + .sheet { padding: 0 14px 1px 6px; }
.sheet.on { font-weight: bold; background: #e1e4ec; border-left-width: 2px; }
.status { flex: none; height: 20px; display: flex; align-items: center; background: linear-gradient(#cdd0e2, #b6b9cd); border-top: 1px solid #55586c; border-bottom: 1px solid #6d8ca4; font: 11px/13px var(--head); }
.name { flex: 1; padding-left: 2px; }
.cell { height: 16px; min-width: 8px; border-left: 1px solid #dfe1ec; }
.mode { padding: 2px 6px 0 4px; }
.qm { width: 76px; padding-left: 12px; text-align: left; }
.qm b { display: block; width: 13px; font: bold 11px/12px "DejaVu Sans", sans-serif; text-align: center; color: #0a9614; background: #fff; border: 1px solid #2a5a8a; }
.tag { margin-right: 14px; }
```
